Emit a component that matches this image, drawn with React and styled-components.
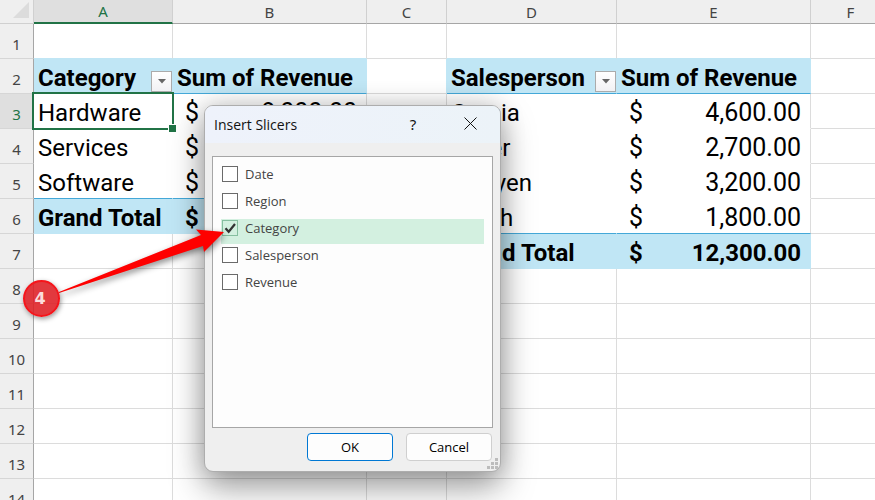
import React, { useState } from 'react';
import styled, { createGlobalStyle, css } from 'styled-components';

const GlobalStyle = createGlobalStyle`
  * {
    box-sizing: border-box;
  }

  body {
    margin: 0;
    background: #fff;
    font-family: 'Noto Sans', 'Open Sans', sans-serif;
  }
`;

const Page = styled.main`
  position: relative;
  height: 100vh;
  overflow: hidden;
`;

const Sheet = styled.table`
  width: 100%;
  min-width: 891px;
  table-layout: fixed;
  border-collapse: separate;
  border-spacing: 0;
`;

const Col = styled.col`
  width: ${({ $width }) => ($width ? `${$width}px` : 'auto')};
`;

const Corner = styled.td`
  height: 24px;
  padding: 0 4px 3px 0;
  background: #efefef;
  border-right: 1px solid #d0d0d0;
  border-bottom: 1px solid #d0d0d0;

  svg {
    display: block;
    margin-left: auto;
  }
`;

const ColumnHead = styled.th`
  height: 24px;
  padding: 0;
  background: ${({ $active }) => ($active ? '#dfdfdf' : '#efefef')};
  color: ${({ $active }) => ($active ? '#217346' : '#444')};
  border-right: 1px solid #d0d0d0;
  border-bottom: ${({ $active }) =>
    $active ? '2px solid #217346' : '1px solid #a6a6a6'};
  font-size: 15px;
  font-weight: 400;
  line-height: 20px;
`;

const RowHead = styled.th`
  height: 35px;
  padding: 6px 0 0;
  background: ${({ $active }) => ($active ? '#dfdfdf' : '#efefef')};
  color: ${({ $active }) => ($active ? '#217346' : '#444')};
  border-right: 1px solid #a6a6a6;
  border-bottom: 1px solid #d6d6d6;
  font-size: 15px;
  font-weight: 400;
  line-height: 22px;
`;

const Cell = styled.td`
  position: relative;
  height: 35px;
  padding: 0;
  border-right: 1px solid ${({ $right }) => $right || '#dcdcdc'};
  border-bottom: 1px solid ${({ $bottom }) => $bottom || '#dcdcdc'};
  background: ${({ $fill }) => $fill || '#fff'};
  color: #000;
  font-family: Roboto, 'Liberation Sans', sans-serif;
  font-size: 24px;
  font-weight: ${({ $bold }) => ($bold ? 700 : 400)};
  line-height: 34px;
  white-space: nowrap;
`;

const Label = styled.div`
  display: flex;
  justify-content: space-between;
  height: 34px;
  padding: 2px 0 0 4px;
`;

const Money = styled.div`
  display: flex;
  justify-content: space-between;
  height: 34px;
  padding: 2px 9px 0 12px;
  font-size: ${({ $total }) => ($total ? '24px' : '25px')};
`;

const FilterButton = styled.button`
  display: flex;
  align-items: center;
  justify-content: center;
  align-self: flex-end;
  width: 21px;
  height: 21px;
  margin-bottom: 1px;
  padding: 0;
  border: 1px solid #ababab;
  background: linear-gradient(#fff, #f1f1f4);
`;

const Selection = styled.div`
  position: absolute;
  z-index: 1;
  inset: -2px;
  border: 2px solid #217346;

  &::after {
    content: '';
    position: absolute;
    right: -4px;
    bottom: -4px;
    width: 7px;
    height: 7px;
    border: solid #fff;
    border-width: 1px 0 0 1px;
    background: #217346;
  }
`;

const Dialog = styled.form`
  position: absolute;
  z-index: 2;
  top: 105px;
  left: 204px;
  width: 297px;
  border: 1px solid #adadad;
  border-radius: 9px;
  background: #efefef;
  box-shadow: 0 16px 34px rgba(0, 0, 0, 0.36), 0 0 24px rgba(0, 0, 0, 0.18);
  color: #111;
  overflow: hidden;
`;

const TitleBar = styled.header`
  display: flex;
  align-items: center;
  height: 37px;
  padding: 0 14px 0 9px;
  background: linear-gradient(90deg, #eef2fb, #ecf3f8);
`;

const Title = styled.h1`
  flex: 1;
  margin: 0;
  font-family: 'Open Sans', 'Noto Sans', sans-serif;
  font-size: 14px;
  font-weight: 400;
  line-height: 20px;
`;

const TitleButton = styled.button`
  display: flex;
  align-items: center;
  justify-content: center;
  width: 32px;
  height: 28px;
  margin-left: ${({ $gap }) => $gap || 0};
  padding: 0 0 2px;
  border: 0;
  background: transparent;
  color: #111;
  font: 400 15px 'Noto Sans', sans-serif;
`;

const FieldList = styled.div`
  display: flex;
  flex-direction: column;
  gap: 2px;
  height: 272px;
  margin: 13px 7px 0;
  padding: 8px;
  border: 1px solid #a6a6a6;
  background: #fdfdfd;
`;

const Field = styled.label`
  display: flex;
  gap: 7px;
  height: 25px;
  padding: 1px;
  background: ${({ $checked }) => ($checked ? '#d3f0e0' : 'transparent')};
  color: #444;
  font-family: 'Open Sans', 'Noto Sans', sans-serif;
  font-size: 13px;
  line-height: 17px;
`;

const Checkbox = styled.input`
  appearance: none;
  width: 16px;
  height: 16px;
  margin: 0;
  border: 1px solid #6a6a6a;
  background: #fff;

  &:checked {
    border-color: #86bfa0;
    background: #d3f0e0;
  }
`;

const Box = styled.span`
  position: relative;
  display: flex;
  height: 16px;

  svg {
    position: absolute;
    inset: 0;
    pointer-events: none;
  }
`;

const Actions = styled.footer`
  display: flex;
  justify-content: flex-end;
  gap: 13px;
  padding: 5px 8px 10px;
`;

const actionColors = css`
  border: 1px solid ${({ $primary }) => ($primary ? '#0078d4' : '#cfcfcf')};
`;

const ActionButton = styled.button`
  ${actionColors}
  width: 86px;
  height: 28px;
  padding: 0;
  border-radius: 4px;
  background: #fdfdfd;
  color: #000;
  font: 400 13px/20px 'Open Sans', 'Noto Sans', sans-serif;
`;

const Grip = styled.svg`
  position: absolute;
  right: 2px;
  bottom: 2px;
`;

const Callout = styled.svg`
  position: absolute;
  z-index: 3;
  top: 210px;
  left: 10px;
  pointer-events: none;
`;

const Arrow = styled.path`
  filter: drop-shadow(1px 3px 3px rgba(0, 0, 0, 0.45));
`;

const Badge = styled.div`
  position: absolute;
  z-index: 4;
  top: 280px;
  left: 23px;
  display: flex;
  align-items: center;
  justify-content: center;
  width: 37px;
  height: 37px;
  padding-right: 3px;
  border: 2px solid #f5151b;
  border-radius: 50%;
  background: rgba(222, 30, 35, 0.88);
  box-shadow: 1px 2px 5px rgba(0, 0, 0, 0.4);
  color: #fbdcdc;
  font: 700 16px/20px 'DejaVu Sans', sans-serif;
`;

const COLUMNS = [
  { name: 'A', width: 139 },
  { name: 'B', width: 194 },
  { name: 'C', width: 80 },
  { name: 'D', width: 170 },
  { name: 'E', width: 194 },
  { name: 'F', width: 80 },
  { name: '', width: null }
];

const BAND = '#c0e6f5';
const RULE = '#44a8d8';
const ACTIVE = { column: 'A', row: 3 };

const PIVOTS = [
  {
    label: 'A',
    value: 'B',
    before: null,
    title: 'Category',
    rows: [
      ['Hardware', '8,000.00'],
      ['Services', '2,300.00'],
      ['Software', '2,000.00']
    ],
    total: '12,300.00'
  },
  {
    label: 'D',
    value: 'E',
    before: 'C',
    title: 'Salesperson',
    rows: [
      ['Garcia', '4,600.00'],
      ['Miller', '2,700.00'],
      ['Nguyen', '3,200.00'],
      ['Smith', '1,800.00']
    ],
    total: '12,300.00'
  }
];

const FIELDS = ['Date', 'Region', 'Category', 'Salesperson', 'Revenue'];

const Amount = ({ total, children }) => (
  <Money $total={total}>
    <span>$</span>
    <span>{children}</span>
  </Money>
);

const renderCell = (column, row) => {
  const pivot = PIVOTS.find(p => p.label === column || p.value === column);
  const next = PIVOTS.find(p => p.before === column);
  const key = `${column}${row}`;

  if (!pivot) {
    const banded = next && (row === 2 || row === next.rows.length + 3);
    return <Cell key={key} $right={banded ? BAND : undefined} />;
  }

  const isLabel = pivot.label === column;
  const totalRow = pivot.rows.length + 3;

  if (row === 1) {
    return <Cell key={key} $bottom={BAND} />;
  }

  if (row === 2) {
    return (
      <Cell key={key} $fill={BAND} $right={BAND} $bottom={RULE} $bold>
        <Label>
          {isLabel ? pivot.title : 'Sum of Revenue'}
          {isLabel && (
            <FilterButton type="button" aria-label={`Filter ${pivot.title}`}>
              <svg width="8" height="5" viewBox="0 0 8 5">
                <path d="M0 0h8L4 4.5z" fill="#666" />
              </svg>
            </FilterButton>
          )}
        </Label>
      </Cell>
    );
  }

  if (row < totalRow) {
    const [label, amount] = pivot.rows[row - 3];
    const selected = column === ACTIVE.column && row === ACTIVE.row;
    return (
      <Cell
        key={key}
        $right={isLabel ? '#fff' : undefined}
        $bottom={row === totalRow - 1 ? RULE : '#fff'}
      >
        {isLabel ? <Label>{label}</Label> : <Amount>{amount}</Amount>}
        {selected && <Selection />}
      </Cell>
    );
  }

  if (row === totalRow) {
    return (
      <Cell key={key} $fill={BAND} $right={BAND} $bottom={BAND} $bold>
        {isLabel ? (
          <Label>Grand Total</Label>
        ) : (
          <Amount total>{pivot.total}</Amount>
        )}
      </Cell>
    );
  }

  return <Cell key={key} />;
};

const Grid = () => (
  <Sheet>
    <colgroup>
      <Col $width={34} />
      {COLUMNS.map(({ name, width }) => (
        <Col key={name} $width={width} />
      ))}
    </colgroup>
    <thead>
      <tr>
        <Corner>
          <svg width="16" height="16" viewBox="0 0 16 16">
            <path d="M16 0v16H0z" fill="#dcdcdc" />
          </svg>
        </Corner>
        {COLUMNS.map(({ name }) => (
          <ColumnHead
            key={name}
            scope="col"
            $active={name === ACTIVE.column}
          >
            {name}
          </ColumnHead>
        ))}
      </tr>
    </thead>
    <tbody>
      {Array.from({ length: 14 }, (_, i) => i + 1).map(row => (
        <tr key={row}>
          <RowHead scope="row" $active={row === ACTIVE.row}>
            {row}
          </RowHead>
          {COLUMNS.map(({ name }) => renderCell(name, row))}
        </tr>
      ))}
    </tbody>
  </Sheet>
);

const InsertSlicers = () => {
  const [checked, setChecked] = useState(['Category']);

  const toggle = field =>
    setChecked(
      checked.includes(field)
        ? checked.filter(f => f !== field)
        : [...checked, field]
    );

  return (
    <Dialog role="dialog" aria-labelledby="slicers-title">
      <TitleBar>
        <Title id="slicers-title">Insert Slicers</Title>
        <TitleButton type="button" aria-label="Help">
          ?
        </TitleButton>
        <TitleButton type="button" aria-label="Close" $gap="25px">
          <svg width="13" height="13" viewBox="0 0 13 13">
            <path d="M0.5 0.5l12 12M12.5 0.5l-12 12" stroke="#111" />
          </svg>
        </TitleButton>
      </TitleBar>
      <FieldList>
        {FIELDS.map(field => {
          const isChecked = checked.includes(field);
          return (
            <Field key={field} $checked={isChecked}>
              <Box>
                <Checkbox
                  type="checkbox"
                  checked={isChecked}
                  onChange={() => toggle(field)}
                />
                {isChecked && (
                  <svg width="16" height="16" viewBox="0 0 16 16">
                    <path
                      d="M3.5 8.2l3.2 3.6L13 4"
                      fill="none"
                      stroke="#333"
                      strokeWidth="2.2"
                    />
                  </svg>
                )}
              </Box>
              {field}
            </Field>
          );
        })}
      </FieldList>
      <Actions>
        <ActionButton type="button" $primary>
          OK
        </ActionButton>
        <ActionButton type="button">Cancel</ActionButton>
      </Actions>
      <Grip width="11" height="11" viewBox="0 0 11 11" fill="#bcbcbc">
        <path d="M8 0h3v3H8zM4 4h3v3H4zM8 4h3v3H8zM0 8h3v3H0zM4 8h3v3H4zM8 8h3v3H8z" />
      </Grip>
    </Dialog>
  );
};

const App = () => (
  <>
    <GlobalStyle />
    <Page>
      <Grid />
      <InsertSlicers />
      <Callout width="230" height="110" viewBox="10 210 230 110">
        <Arrow
          d="M59 292L201 235L196 229.5L224 232L204 252L203 246L59 293z"
          fill="#fe0000"
        />
      </Callout>
      <Badge>4</Badge>
    </Page>
  </>
);

export default App;
